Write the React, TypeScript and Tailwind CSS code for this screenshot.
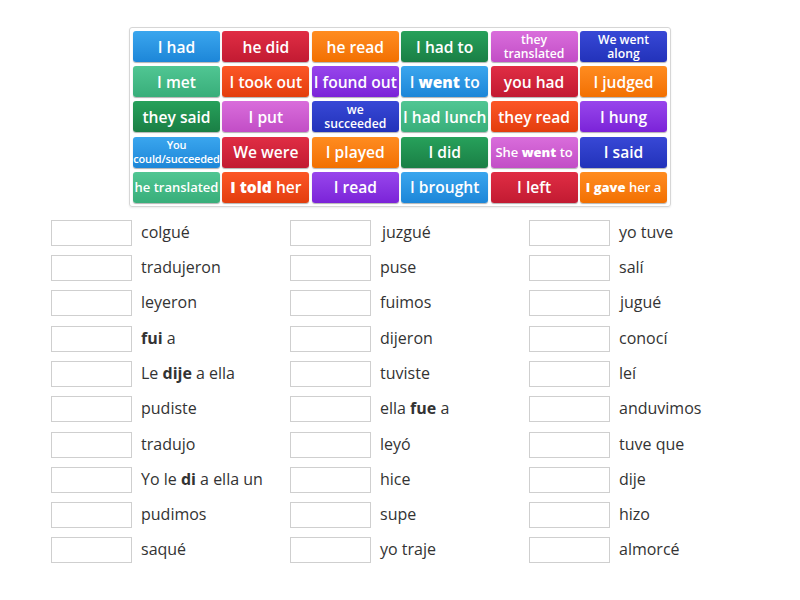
import React from 'react';

type Tone = 'blue' | 'red' | 'orange' | 'dgreen' | 'pink' | 'indigo' | 'lgreen' | 'rorange' | 'purple';

const tones: Record<Tone, string> = {
    blue: 'bg-linear-to-b from-[#3aa6ee] to-[#1c86d8]',
    red: 'bg-linear-to-b from-[#e02d44] to-[#c21a32]',
    orange: 'bg-linear-to-b from-[#ff8c1f] to-[#f27000]',
    dgreen: 'bg-linear-to-b from-[#27a15b] to-[#1a7f45]',
    pink: 'bg-linear-to-b from-[#d96ddb] to-[#c24dc6]',
    indigo: 'bg-linear-to-b from-[#3848d6] to-[#2232ba]',
    lgreen: 'bg-linear-to-b from-[#50c693] to-[#38ae7a]',
    rorange: 'bg-linear-to-b from-[#fc5626] to-[#e33d0c]',
    purple: 'bg-linear-to-b from-[#9845ec] to-[#7b22d8]',
};

interface ITile {
    tone: Tone;
    text: React.ReactNode;
    size?: 'md' | 'sm' | 'xs' | 'xxs';
}

const tiles: ITile[] = [
    { tone: 'blue', text: 'I had' },
    { tone: 'red', text: 'he did' },
    { tone: 'orange', text: 'he read' },
    { tone: 'dgreen', text: 'I had to' },
    { tone: 'pink', text: <>they<br />translated</>, size: 'xs' },
    { tone: 'indigo', text: <>We went<br />along</>, size: 'xs' },

    { tone: 'lgreen', text: 'I met' },
    { tone: 'rorange', text: 'I took out' },
    { tone: 'purple', text: 'I found out' },
    { tone: 'blue', text: <>I <b className="font-extrabold">went</b> to</> },
    { tone: 'red', text: 'you had' },
    { tone: 'orange', text: 'I judged' },

    { tone: 'dgreen', text: 'they said' },
    { tone: 'pink', text: 'I put' },
    { tone: 'indigo', text: <>we<br />succeeded</>, size: 'xs' },
    { tone: 'lgreen', text: 'I had lunch' },
    { tone: 'rorange', text: 'they read' },
    { tone: 'purple', text: 'I hung' },

    { tone: 'blue', text: <>You<br />could/succeeded</>, size: 'xxs' },
    { tone: 'red', text: 'We were' },
    { tone: 'orange', text: 'I played' },
    { tone: 'dgreen', text: 'I did' },
    { tone: 'pink', text: <>She <b className="font-extrabold">went</b> to</>, size: 'sm' },
    { tone: 'indigo', text: 'I said' },

    { tone: 'lgreen', text: 'he translated', size: 'sm' },
    { tone: 'rorange', text: <><b className="font-extrabold">I told</b> her</> },
    { tone: 'purple', text: 'I read' },
    { tone: 'blue', text: 'I brought' },
    { tone: 'red', text: 'I left' },
    { tone: 'orange', text: <><b className="font-extrabold">I gave</b> her a</>, size: 'sm' },
];

const sizes = {
    md: 'text-[15.6px] leading-[18px]',
    sm: 'text-[13px] leading-[16px]',
    xs: 'text-[12.2px] leading-[14px]',
    xxs: 'text-[11px] leading-[14px] tracking-[-0.2px]',
};

const columns: React.ReactNode[][] = [
    [
        'colgué',
        'tradujeron',
        'leyeron',
        <><b className="font-bold">fui</b> a</>,
        <>Le <b className="font-bold">dije</b> a ella</>,
        'pudiste',
        'tradujo',
        <>Yo le <b className="font-bold">di</b> a ella un</>,
        'pudimos',
        'saqué',
    ],
    [
        <span className="pl-[2px]">juzgué</span>,
        'puse',
        'fuimos',
        'dijeron',
        'tuviste',
        <>ella <b className="font-bold">fue</b> a</>,
        'leyó',
        'hice',
        'supe',
        'yo traje',
    ],
    [
        'yo tuve',
        'salí',
        <span className="pl-[1px]">jugué</span>,
        'conocí',
        'leí',
        'anduvimos',
        'tuve que',
        'dije',
        'hizo',
        'almorcé',
    ],
];

const Tile = ({ tile }: { tile: ITile }) => (
    <div
        className={`${tones[tile.tone]} ${sizes[tile.size ?? 'md']} h-[31px] rounded-[3px] shadow-[0_1px_1px_rgba(0,0,0,0.3)] flex items-center justify-center text-center text-white font-semibold whitespace-nowrap overflow-hidden`}
    >
        <span>{tile.text}</span>
    </div>
);

const App = () => {
    return (
        <div className="w-[800px] h-[600px] bg-white font-['Open_Sans',sans-serif] text-[#333]">
            <div className="pt-[27px] pl-[129px]">
                <div className="w-[542px] border border-[#d6d6d6] rounded-[3px] p-[3px] grid grid-cols-6 gap-x-[2.4px] gap-y-[4.2px] shadow-[0_1px_2px_rgba(0,0,0,0.08)]">
                    {tiles.map((t, i) => (
                        <Tile key={i} tile={t} />
                    ))}
                </div>
            </div>
            <div className="mt-[13px] pl-[51px] flex">
                {columns.map((col, ci) => (
                    <div key={ci} className="w-[239px] flex flex-col gap-[9.3px]">
                        {col.map((item, ri) => (
                            <div key={ri} className="flex items-center gap-[9px] h-[26px]">
                                <div className="w-[81px] h-[26px] border border-[#cfcfcf] bg-white shrink-0" />
                                <span className="text-[16px] whitespace-nowrap pb-[2px]">{item}</span>
                            </div>
                        ))}
                    </div>
                ))}
            </div>
        </div>
    );
};

export default App;
